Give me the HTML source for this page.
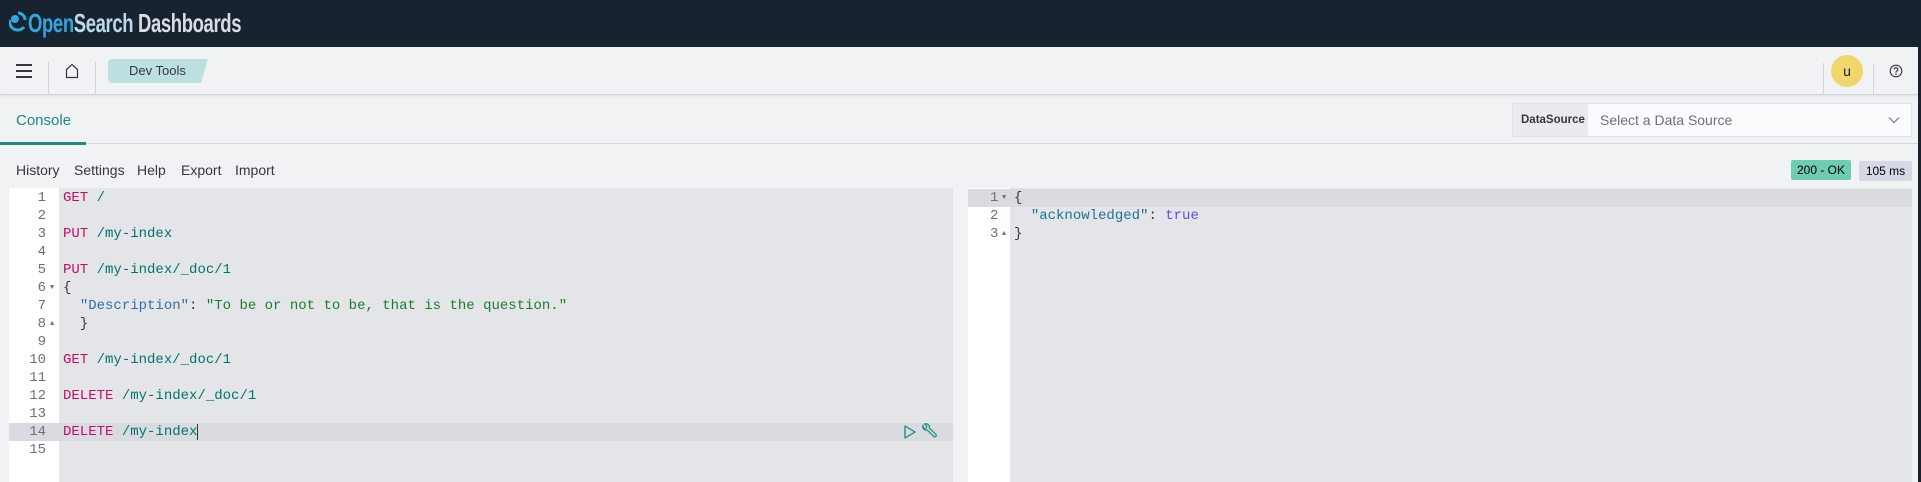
<!DOCTYPE html>
<html><head><meta charset="utf-8"><style>
*{margin:0;padding:0;box-sizing:border-box}
body{width:1921px;height:482px;overflow:hidden;background:#f1f2f4;font-family:"Liberation Sans",sans-serif;position:relative;color:#343741}
.abs{position:absolute}
.top{left:0;top:0;width:1921px;height:47px;background:#19232f}
.logo{left:28px;top:8px;font-weight:bold;font-size:26px;letter-spacing:-0.5px;white-space:nowrap;transform:scaleX(0.71);transform-origin:0 0}
.bar2{left:0;top:47px;width:1918px;height:48px;background:#f1f2f4;border-bottom:1px solid #d3d6dc;box-shadow:0 1px 2px rgba(0,0,0,.08)}
.vd{width:1px;background:#d3d6dc}
.bc{left:108px;top:59px;width:100px;height:24px;background:#bcdfe0;clip-path:polygon(0 0,100% 0,93% 100%,0 100%);border-radius:4px 0 0 4px;font-size:13px;color:#343741;line-height:24px;padding-left:21px}
.tabline{left:0;top:143px;width:1918px;height:1px;background:#d3d6dc}
.mono{font-family:"Liberation Mono",monospace;font-size:14px}
.ln{position:absolute;height:18px;line-height:18px;white-space:pre}
.k{color:#c80a68}.u{color:#00756c}.s{color:#1b7d2c}.p{color:#2f6fa7}.t{color:#5a4ee6}.g{color:#343741}
.num{color:#69707d;text-align:right;width:37px;left:9px}
.arr{font-size:7px;color:#69707d}
</style></head><body>
<div class="abs top"></div>
<svg class="abs" style="left:9px;top:11px" width="18" height="24" viewBox="0 0 18 24"><path d="M9 2a7 7 0 0 1 7 7" stroke="#2fa7e0" stroke-width="3" fill="none"/><path d="M1 9a8 8 0 0 0 14 7" stroke="#2fa7e0" stroke-width="3" fill="none"/><circle cx="6" cy="8" r="4" fill="#2fa7e0"/></svg>
<div class="abs logo"><span style="color:#2fa7e0">Open</span><span style="color:#b9d9f0">Search</span> <span style="color:#d9dee5">Dashboards</span></div>
<div class="abs bar2"></div>
<div class="abs" style="left:16px;top:64px;width:16px;height:2px;background:#343741"></div>
<div class="abs" style="left:16px;top:70px;width:16px;height:2px;background:#343741"></div>
<div class="abs" style="left:16px;top:76px;width:16px;height:2px;background:#343741"></div>
<div class="abs vd" style="left:48px;top:62px;height:33px"></div>
<svg class="abs" style="left:64px;top:63px" width="16" height="16" viewBox="0 0 16 16"><path d="M2.5 14.5V6.5L8 1.5l5.5 5v8z" stroke="#343741" stroke-width="1.2" fill="none"/></svg>
<div class="abs vd" style="left:95px;top:62px;height:33px"></div>
<div class="abs bc">Dev Tools</div>
<div class="abs vd" style="left:1823px;top:63px;height:32px"></div>
<div class="abs" style="left:1831px;top:55px;width:32px;height:32px;border-radius:50%;background:#f0d66c;text-align:center;line-height:32px;font-size:14px;color:#1a1c21">u</div>
<div class="abs vd" style="left:1873px;top:63px;height:32px"></div>
<svg class="abs" style="left:1889px;top:64px" width="14" height="14" viewBox="0 0 14 14"><circle cx="7" cy="7" r="5.8" stroke="#343741" stroke-width="1.1" fill="none"/><path d="M5.2 5.5a1.8 1.8 0 1 1 2.4 1.7c-.5.2-.6.5-.6 1v.4" stroke="#343741" stroke-width="1.1" fill="none"/><circle cx="7" cy="10.2" r=".7" fill="#343741"/></svg>
<div class="abs" style="left:1918px;top:47px;width:3px;height:435px;background:#19232f"></div>
<div class="abs" style="left:16px;top:112px;font-size:15px;color:#1d8a80">Console</div>
<div class="abs tabline"></div>
<div class="abs" style="left:0;top:142px;width:86px;height:3px;background:#1d8a80"></div>
<div class="abs" style="left:1512px;top:103px;width:400px;height:34px;border:1px solid #dfe2e7;background:#fbfcfd"></div>
<div class="abs" style="left:1513px;top:104px;width:75px;height:32px;background:#e9ebee;font-size:11.5px;font-weight:bold;line-height:32px;padding-left:8px;color:#343741">DataSource</div>
<div class="abs" style="left:1600px;top:104px;height:32px;line-height:32px;font-size:14px;color:#69707d">Select a Data Source</div>
<svg class="abs" style="left:1888px;top:116px" width="12" height="8" viewBox="0 0 12 8"><path d="M1 1.5l5 5 5-5" stroke="#69707d" stroke-width="1.1" fill="none"/></svg>
<div class="abs" style="left:16px;top:162px;font-size:14px;word-spacing:0;white-space:nowrap"><span>History</span><span style="position:absolute;left:58px">Settings</span><span style="position:absolute;left:121px">Help</span><span style="position:absolute;left:165px">Export</span><span style="position:absolute;left:219px">Import</span></div>
<div class="abs" style="left:1791px;top:160px;width:60px;height:20px;background:#6dccb1;font-size:12px;text-align:center;line-height:20px;color:#000;border-radius:2px">200 - OK</div>
<div class="abs" style="left:1859px;top:161px;width:53px;height:20px;background:#d3dae6;font-size:12px;text-align:center;line-height:20px;color:#000;border-radius:2px">105 ms</div>
<!-- left editor -->
<div class="abs" style="left:9px;top:188px;width:944px;height:294px;background:#e4e5e9"></div>
<div class="abs" style="left:9px;top:188px;width:50px;height:294px;background:#fff"></div>
<div class="abs" style="left:9px;top:423px;width:944px;height:18px;background:#d9dbe0"></div>
<div class="mono">
<div class="ln num" style="top:189px">1</div><div class="ln" style="left:63px;top:189px"><span class="k">GET</span> <span class="u">/</span></div>
<div class="ln num" style="top:207px">2</div>
<div class="ln num" style="top:225px">3</div><div class="ln" style="left:63px;top:225px"><span class="k">PUT</span> <span class="u">/my-index</span></div>
<div class="ln num" style="top:243px">4</div>
<div class="ln num" style="top:261px">5</div><div class="ln" style="left:63px;top:261px"><span class="k">PUT</span> <span class="u">/my-index/_doc/1</span></div>
<div class="ln num" style="top:279px">6</div><div class="ln arr" style="left:50px;top:279px">▼</div><div class="ln g" style="left:63px;top:279px">{</div>
<div class="ln num" style="top:297px">7</div><div class="ln" style="left:63px;top:297px">  <span class="p">"Description"</span><span class="g">: </span><span class="s">"To be or not to be, that is the question."</span></div>
<div class="ln num" style="top:315px">8</div><div class="ln arr" style="left:50px;top:315px">▲</div><div class="ln g" style="left:63px;top:315px">  }</div>
<div class="ln num" style="top:333px">9</div>
<div class="ln num" style="top:351px">10</div><div class="ln" style="left:63px;top:351px"><span class="k">GET</span> <span class="u">/my-index/_doc/1</span></div>
<div class="ln num" style="top:369px">11</div>
<div class="ln num" style="top:387px">12</div><div class="ln" style="left:63px;top:387px"><span class="k">DELETE</span> <span class="u">/my-index/_doc/1</span></div>
<div class="ln num" style="top:405px">13</div>
<div class="ln num" style="top:423px">14</div><div class="ln" style="left:63px;top:423px"><span class="k">DELETE</span> <span class="u">/my-index</span><span style="border-left:1px solid #343741"></span></div>
<div class="ln num" style="top:441px">15</div>
</div>
<svg class="abs" style="left:903px;top:424px" width="14" height="16" viewBox="0 0 14 16"><path d="M2 2v12l10-6z" stroke="#1d8a80" stroke-width="1.3" fill="none" stroke-linejoin="round"/></svg>
<svg class="abs" style="left:920px;top:423px" width="18" height="18" viewBox="0 0 18 18"><path d="M3 2.5a3.5 3.5 0 0 0 4.3 4.6l6.5 6.5a1.5 1.5 0 0 0 2.1-2.1L9.4 5A3.5 3.5 0 0 0 4.8 1l2 2-.6 2.3-2.3.6z" stroke="#1d8a80" stroke-width="1.2" fill="none"/></svg>
<!-- right editor -->
<div class="abs" style="left:968px;top:188px;width:944px;height:294px;background:#e4e5e9"></div>
<div class="abs" style="left:968px;top:188px;width:42px;height:294px;background:#fff"></div>
<div class="abs" style="left:968px;top:189px;width:944px;height:18px;background:#d9dbe0"></div>
<div class="mono">
<div class="ln" style="left:990px;top:189px;color:#69707d">1</div><div class="ln arr" style="left:1002px;top:189px">▼</div><div class="ln g" style="left:1014px;top:189px">{</div>
<div class="ln" style="left:990px;top:207px;color:#69707d">2</div><div class="ln" style="left:1014px;top:207px">  <span style="color:#1e6f99">"acknowledged"</span><span class="g">: </span><span class="t">true</span></div>
<div class="ln" style="left:990px;top:225px;color:#69707d">3</div><div class="ln arr" style="left:1002px;top:225px">▲</div><div class="ln g" style="left:1014px;top:225px">}</div>
</div>
</body></html>
